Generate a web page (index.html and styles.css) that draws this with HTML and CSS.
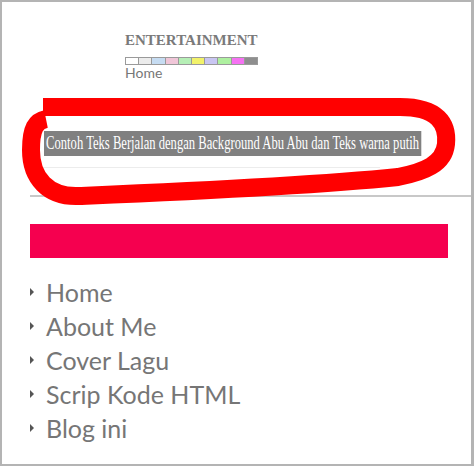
FILE: index.html
```html
<!DOCTYPE html>
<html lang="en">
<head>
<meta charset="UTF-8">
<meta name="viewport" content="width=device-width, initial-scale=1.0">
<title>Entertainment</title>
<link rel="stylesheet" href="styles.css">
</head>
<body>
<div class="frame">

    <div class="header">
        <h1 class="site-title">ENTERTAINMENT</h1>
        <div class="swatches">
            <span class="sw" style="background:#ffffff"></span>
            <span class="sw" style="background:#ececec"></span>
            <span class="sw" style="background:#c6dcf2"></span>
            <span class="sw" style="background:#f0c6d8"></span>
            <span class="sw" style="background:#b6efb6"></span>
            <span class="sw" style="background:#f2f26a"></span>
            <span class="sw" style="background:#c9c6f2"></span>
            <span class="sw" style="background:#aef0a0"></span>
            <span class="sw" style="background:#f572f2"></span>
            <span class="sw" style="background:#8e8e8e"></span>
        </div>
        <div class="crumb">Home</div>
    </div>

    <div class="marquee-row">
        <span class="marquee">Contoh Teks Berjalan dengan Background Abu Abu dan Teks warna putih</span>
    </div>
    <div class="thin-rule"></div>
    <div class="divider"></div>

    <div class="pink-bar"></div>

    <ul class="menu">
        <li>Home</li>
        <li>About Me</li>
        <li>Cover Lagu</li>
        <li>Scrip Kode HTML</li>
        <li>Blog ini</li>
    </ul>

    <!-- red marker circle drawn over the marquee -->
    <svg class="marker" width="474" height="466" viewBox="0 0 474 466">
        <path d="M43,107 L400,107 C438,107 448,124 446,144 C444,164 424,172 398,177 C300,187 150,193 78,196 C48,197 31,178 31,150 C31,128 36,121 46,119"
              fill="none" stroke="#ff0000" stroke-width="18" stroke-linecap="butt" stroke-linejoin="round"/>
    </svg>
</div>
</body>
</html>
```

FILE: styles.css
```css
body{
    margin: 0;
    font-family: "Lato", sans-serif;
}
.frame{
    position: relative;
    width: 474px;
    height: 466px;
    box-sizing: border-box;
    border: 2px solid #b4b4b4;
    border-right-width: 3px;
    background: #fff;
    overflow: hidden;
}
.header{
    padding: 30px 0 0 123px;
}
.site-title{
    margin: 0;
    font-family: "Liberation Serif", serif;
    font-weight: bold;
    font-size: 15px;
    line-height: 17px;
    color: #7a7a7a;
}
.swatches{
    display: flex;
    width: 133px;
    margin-top: 8px;
}
.sw{
    flex: 1;
    height: 6px;
    border: 1px solid #9a9a9a;
    border-right: none;
}
.sw:last-child{
    border-right: 1px solid #9a9a9a;
}
.crumb{
    font-size: 14px;
    line-height: 16px;
    color: #777;
}
.marquee-row{
    padding: 50px 0 0 42px;
    height: 25px;
}
/* condensed running text */
.marquee{
    display: inline-block;
    white-space: nowrap;
    background: #808080;
    color: #fff;
    font-family: "Liberation Serif", serif;
    font-size: 18px;
    line-height: 25px;
    padding: 0 3px;
    transform: scaleX(0.7);
    transform-origin: left top;
}
.thin-rule{
    margin: 11px 0 0 28px;
    width: 350px;
    height: 1px;
    background: #ececec;
}
.divider{
    margin: 27px 0 0 28px;
    height: 2px;
    background: #c8c8c8;
}
.pink-bar{
    margin: 27px 23px 0 28px;
    height: 34px;
    background: #f5004f;
}
.menu{
    list-style: none;
    margin: 17px 0 0 0;
    padding: 0 0 0 28px;
}
.menu li{
    display: flex;
    align-items: center;
    gap: 12px;
    font-size: 25px;
    line-height: 34px;
    color: #767676;
}
.menu li::before{
    content: "";
    border-left: 4px solid #555;
    border-top: 4px solid transparent;
    border-bottom: 4px solid transparent;
}
.marker{
    position: absolute;
    left: -2px;
    top: -2px;
}
```
